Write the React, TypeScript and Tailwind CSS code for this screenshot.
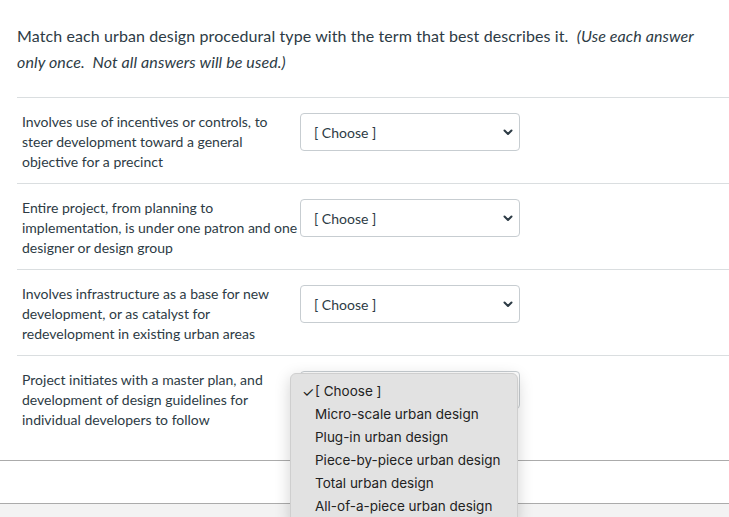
import React from 'react'

const ROWS = [
  'Involves use of incentives or controls, to steer development toward a general objective for a precinct',
  'Entire project, from planning to implementation, is under one patron and one designer or design group',
  'Involves infrastructure as a base for new development, or as catalyst for redevelopment in existing urban areas',
  'Project initiates with a master plan, and development of design guidelines for individual developers to follow',
]

const OPTIONS = [
  'Micro-scale urban design',
  'Plug-in urban design',
  'Piece-by-piece urban design',
  'Total urban design',
  'All-of-a-piece urban design',
]

function Chevron() {
  return (
    <svg width="10" height="7" viewBox="0 0 10 7" className="shrink-0">
      <polyline points="1.5,1.5 5,5 8.5,1.5" fill="none" stroke="#2d3b45" strokeWidth="2" strokeLinecap="round" strokeLinejoin="round" />
    </svg>
  )
}

function FakeSelect({ open }: { open?: boolean }) {
  return (
    <div className="flex h-[38px] w-[220px] shrink-0 items-center justify-between rounded-[4px] border border-[#c7cdd1] bg-white pl-[13px] pr-[6px] text-[14px] text-[#2d3b45]">
      {/* the open one is hidden under the menu */}
      {!open && <span>[ Choose ]</span>}
      {!open && <Chevron />}
    </div>
  )
}

export default function App() {
  return (
    <div className="relative h-[517px] w-[729px] overflow-hidden bg-white font-['Lato','Noto_Sans',sans-serif] text-[#2d3b45]">
      <p className="px-[17px] pt-[23px] text-[16px] leading-[26px] tracking-[0.1px]">
        Match each urban design procedural type with the term that best describes it.{'\u00a0 '}
        <em>(Use each answer only once.{'\u00a0 '}Not all answers will be used.)</em>
      </p>

      <div className="ml-[17px] mt-[22px] border-t border-[#dadee0]">
        {ROWS.map((text, i) => (
          <div
            key={i}
            className={`flex items-start pl-[5px] pt-[14px] pb-[11px] ${i < ROWS.length - 1 ? 'border-b border-[#dadee0]' : ''}`}
          >
            <p className="w-[278px] shrink-0 text-[14px] leading-[20px]">{text}</p>
            <div className="mt-[1px]">
              <FakeSelect open={i === ROWS.length - 1} />
            </div>
          </div>
        ))}
      </div>

      <div className="mt-[19px] h-[43px] border-t border-[#ababab]" />
      <div className="h-[20px] border-t border-[#ababab] bg-[#f3f3f3]" />

      {/* open dropdown menu */}
      <div className="absolute left-[290px] top-[373px] w-[228px] rounded-[6px] border border-[#cfcfcf] bg-[#e2e2e2] pt-[6px] pb-[8px] font-['Inter','Liberation_Sans',sans-serif] text-[13.5px] leading-[23px] text-[#222] shadow-[0_4px_16px_rgba(0,0,0,0.18)]">
        <div className="flex">
          <span className="w-[24px] pl-[11px] text-[14px]">✓</span>
          <span>[ Choose ]</span>
        </div>
        {OPTIONS.map(o => (
          <div key={o} className="pl-[24px]">
            {o}
          </div>
        ))}
      </div>
    </div>
  )
}
